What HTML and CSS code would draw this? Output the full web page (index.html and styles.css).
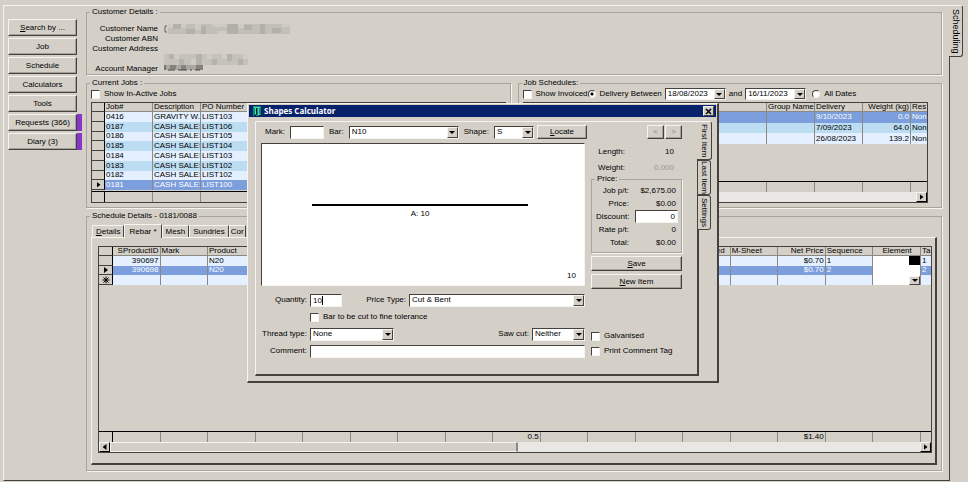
FILE: index.html
```
<!DOCTYPE html>
<html lang="en">
<head>
<meta charset="utf-8">
<title>Scheduling</title>
<link rel="stylesheet" href="styles.css">
</head>
<body>
<main class="page">
  <nav class="nav">
    <button class="btn"><u>S</u>earch by ...</button>
    <button class="btn">Job</button>
    <button class="btn">Schedule</button>
    <button class="btn">Calculators</button>
    <button class="btn">Tools</button>
    <div class="flagged"><button class="btn">Requests (366)</button></div>
    <div class="flagged"><button class="btn">Diary (3)</button></div>
  </nav>

  <div class="content">
    <fieldset class="group customer">
      <legend>Customer Details :</legend>
      <dl class="facts">
        <dt>Customer Name</dt>
        <dd><svg width="128" height="10" viewBox="0 0 128 10" aria-hidden="true"><path d="M3 2H1V8H3" fill="none" stroke="#666"/><path fill="#c2bfb9" d="M4 0h122v10H4z"/><path fill="#b3b0aa" d="M9 0h8v5H9zM22 5h9v5h-9zM37 2h5v8h-5zM63 0h11v10H63zM80 1h8v5h-8zM96 0h5v10h-5zM108 4h9v5h-9z"/><path fill="#cecbc4" d="M4 0h5v4H4zM17 0h5v4h-5zM31 0h6v6h-6zM48 0h15v3H48zM54 7h9v3h-9zM74 0h6v4h-6zM118 0h8v3h-8z"/></svg></dd>
        <dt>Customer ABN</dt><dd></dd>
        <dt>Customer Address</dt><dd></dd>
        <dt class="late">Account Manager</dt>
        <dd class="late"><svg width="86" height="18" viewBox="0 0 86 18" aria-hidden="true"><path fill="#c5c2bc" d="M0 0h84v11H0z"/><path fill="#b5b2ac" d="M5 0h5v5H5zM15 5h5v6h-5zM32 0h6v11h-6zM48 5h5v6h-5zM63 0h5v7h-5zM74 5h5v6h-5z"/><path fill="#cfccc5" d="M10 0h5v5h-5zM27 5h5v6h-5zM43 0h5v5h-5zM58 0h5v5h-5zM79 0h5v5h-5z"/><path fill="#aaa7a1" d="M0 11h39v5H0z"/><path fill="#85827d" d="M6 11h6v4H6zM17 11h5v5h-5zM32 11h7v5h-7z"/><path d="M1 11v5M4 16h7M14 16h9M26 16h2M31 16h5" stroke="#444"/></svg></dd>
      </dl>
    </fieldset>

    <div class="pair">
      <fieldset class="group">
        <legend>Current Jobs :</legend>
        <div class="filters"><label class="check"><input type="checkbox">Show In-Active Jobs</label></div>
        <div class="pane">
          <table class="grid jobs">
            <colgroup><col class="c-sel"><col class="c-m"><col class="c-m"><col class="c-m"><col></colgroup>
            <thead><tr><th></th><th>Job#</th><th>Description</th><th>PO Number</th><th></th></tr></thead>
            <tbody>
              <tr><th></th><td>0416</td><td>GRAVITY W.</td><td>LIST103</td><td></td></tr>
              <tr class="alt"><th></th><td>0187</td><td>CASH SALES</td><td>LIST106</td><td></td></tr>
              <tr><th></th><td>0186</td><td>CASH SALES</td><td>LIST105</td><td></td></tr>
              <tr class="alt"><th></th><td>0185</td><td>CASH SALES</td><td>LIST104</td><td></td></tr>
              <tr><th></th><td>0184</td><td>CASH SALES</td><td>LIST103</td><td></td></tr>
              <tr class="alt"><th></th><td>0183</td><td>CASH SALES</td><td>LIST102</td><td></td></tr>
              <tr><th></th><td>0182</td><td>CASH SALES</td><td>LIST102</td><td></td></tr>
              <tr class="picked"><th><i class="tri right"></i></th><td>0181</td><td>CASH SALES</td><td>LIST100</td><td></td></tr>
            </tbody>
          </table>
          <table class="grid totals">
            <colgroup><col class="c-sel"><col class="c-m"><col class="c-m"><col class="c-m"><col></colgroup>
            <tbody><tr><td></td><td></td><td></td><td></td><td></td></tr></tbody>
          </table>
        </div>
      </fieldset>

      <fieldset class="group">
        <legend>Job Schedules:</legend>
        <div class="filters">
          <label class="check"><input type="checkbox">Show Invoiced</label>
          <label class="check radio"><input type="radio" name="range" checked>Delivery Between</label>
          <span class="combo date"><select aria-label="From date"><option>18/08/2023</option></select><i class="drop"></i></span>
          <span>and</span>
          <span class="combo date"><select aria-label="To date"><option>16/11/2023</option></select><i class="drop"></i></span>
          <label class="check radio all"><input type="radio" name="range">All Dates</label>
        </div>
        <div class="pane inset">
          <table class="grid schedules">
            <colgroup><col class="c-sel"><col><col class="c-m"><col class="c-m"><col class="c-m"><col class="c-m"><col class="c-m"><col class="c-m"><col class="c-res"></colgroup>
            <thead><tr><th></th><th></th><th></th><th></th><th></th><th>Group Name</th><th>Delivery</th><th class="num">Weight (kg)</th><th>Res</th></tr></thead>
            <tbody>
              <tr class="picked"><th></th><td></td><td></td><td></td><td></td><td></td><td>9/10/2023</td><td class="num">0.0</td><td>Non</td></tr>
              <tr class="alt"><th></th><td></td><td></td><td></td><td></td><td></td><td>7/09/2023</td><td class="num">64.0</td><td>Non</td></tr>
              <tr><th></th><td></td><td></td><td></td><td></td><td></td><td>26/08/2023</td><td class="num">139.2</td><td>Non</td></tr>
            </tbody>
          </table>
          <table class="grid totals">
            <colgroup><col class="c-sel"><col><col class="c-m"><col class="c-m"><col class="c-m"><col class="c-m"><col class="c-m"><col class="c-m"><col class="c-res"></colgroup>
            <tbody><tr><td></td><td></td><td></td><td></td><td></td><td></td><td></td><td></td><td></td></tr></tbody>
          </table>
          <div class="scroll"><button aria-label="Scroll left"><i class="tri left"></i></button><span class="thumb short"></span><button aria-label="Scroll right"><i class="tri right"></i></button></div>
        </div>
      </fieldset>
    </div>

    <fieldset class="group details">
      <legend>Schedule Details - 0181/0088</legend>
      <div class="tabs">
        <button><u>D</u>etails</button><button class="on">Rebar *</button><button>Mesh</button><button>Sundries</button><button>Cor</button>
      </div>
      <div class="sheet">
        <div class="pane">
          <table class="grid products">
            <colgroup><col class="c-num"><col><col><col><col><col><col><col><col><col><col><col><col><col><col><col><col><col><col class="c-ta"></colgroup>
            <thead><tr><th></th><th class="num">SProductID</th><th>Mark</th><th>Product</th><th></th><th></th><th></th><th></th><th></th><th></th><th></th><th></th><th></th><th class="cut">ed</th><th>M-Sheet</th><th class="num">Net Price</th><th>Sequence</th><th class="mid">Element</th><th>Ta</th></tr></thead>
            <tbody>
              <tr><th></th><td class="num">390697</td><td></td><td>N20</td><td></td><td></td><td></td><td></td><td></td><td></td><td></td><td></td><td></td><td></td><td></td><td class="num">$0.70</td><td>1</td><td class="element"><i class="swatch"></i></td><td>1</td></tr>
              <tr class="picked"><th><i class="tri right"></i></th><td class="num">390698</td><td></td><td>N20</td><td></td><td></td><td></td><td></td><td></td><td></td><td></td><td></td><td></td><td></td><td></td><td class="num">$0.70</td><td>2</td><td class="element"></td><td>2</td></tr>
              <tr><th><svg class="star" width="8" height="8" viewBox="0 0 8 8" aria-hidden="true"><path d="M4 0.5V7.5M0.5 4H7.5M1.5 1.5L6.5 6.5M6.5 1.5L1.5 6.5" stroke="#000"/></svg></th><td></td><td></td><td></td><td></td><td></td><td></td><td></td><td></td><td></td><td></td><td></td><td></td><td></td><td></td><td></td><td></td><td class="element"><i class="drop"></i></td><td></td></tr>
            </tbody>
          </table>
          <table class="grid totals">
            <colgroup><col class="c-num"><col><col><col><col><col><col><col><col><col><col><col><col><col><col><col><col><col><col class="c-ta"></colgroup>
            <tbody><tr><td></td><td></td><td></td><td></td><td></td><td></td><td></td><td></td><td></td><td class="num">0.5</td><td></td><td></td><td></td><td></td><td></td><td class="num">$1.40</td><td></td><td></td><td></td></tr></tbody>
          </table>
          <div class="scroll"><button aria-label="Scroll left"><i class="tri left"></i></button><span class="thumb"></span><button aria-label="Scroll right"><i class="tri right"></i></button></div>
        </div>
      </div>
    </fieldset>
  </div>
</main>
<aside class="side"><button class="vtab main-tab">Scheduling</button></aside>

<section class="dialog" role="dialog" aria-labelledby="dlg-title">
  <header class="titlebar">
    <svg width="8" height="10" viewBox="0 0 8 10" aria-hidden="true"><path fill="#0a8a72" d="M0 0h8v10H0z"/><path d="M3.5 2V8.5M1 9.5H3M6 9.5H8" fill="none" stroke="#041c3c"/><path d="M1 1.5H7M2.5 2V8M5.5 2V8M5 8.5H7" stroke="#48dcae" fill="none"/></svg>
    <h1 id="dlg-title">Shapes Calculator</h1>
    <button class="close" aria-label="Close"><svg width="7" height="7" viewBox="0 0 7 7" aria-hidden="true"><path d="M1 1L6 6M6 1L1 6" stroke="#000" stroke-width="1.5"/></svg></button>
  </header>
  <div class="dialog-body">
    <div class="calc">
      <div class="toolbar">
        <label for="mark">Mark:</label><input id="mark" class="field mark" type="text">
        <label for="bar">Bar:</label><span class="combo bar"><select id="bar"><option>N10</option></select><i class="drop"></i></span>
        <label for="shape">Shape:</label><span class="combo shape"><select id="shape"><option>S</option></select><i class="drop"></i></span>
        <button class="btn locate"><u>L</u>ocate</button>
        <span class="steps"><button class="btn" disabled>&lt;</button><button class="btn" disabled>&gt;</button></span>
      </div>
      <div class="columns">
        <div class="left-col">
          <div class="canvas">
            <div class="shape-line"></div>
            <span class="dim">A: 10</span>
            <span class="count">10</span>
          </div>
          <div class="form">
            <label for="qty">Quantity:</label>
            <div class="line"><input id="qty" class="field qty" type="text" value="10"><i class="caret"></i><label class="push" for="ptype">Price Type:</label><span class="combo ptype"><select id="ptype"><option>Cut &amp; Bent</option></select><i class="drop"></i></span></div>
            <span></span>
            <div class="line"><label class="check"><input type="checkbox">Bar to be cut to fine tolerance</label></div>
            <label for="thread">Thread type:</label>
            <div class="line"><span class="combo thread"><select id="thread"><option>None</option></select><i class="drop"></i></span><label class="push" for="saw">Saw cut:</label><span class="combo saw"><select id="saw"><option>Neither</option></select><i class="drop"></i></span></div>
            <label for="comment">Comment:</label>
            <div class="line"><input id="comment" class="field comment" type="text"></div>
          </div>
        </div>
        <div class="right-col">
          <dl class="sums"><dt>Length:</dt><dd>10</dd><dt>Weight:</dt><dd class="dim-text">0.000</dd></dl>
          <fieldset class="group price">
            <legend>Price:</legend>
            <div class="row"><span>Job p/t:</span><output>$2,675.00</output></div>
            <div class="row"><span>Price:</span><output>$0.00</output></div>
            <div class="row"><label for="disc">Discount:</label><input id="disc" class="field" type="text" value="0"></div>
            <div class="row"><span>Rate p/t:</span><output>0</output></div>
            <div class="row"><span>Total:</span><output>$0.00</output></div>
          </fieldset>
          <button class="btn"><u>S</u>ave</button>
          <button class="btn"><u>N</u>ew Item</button>
          <div class="flags">
            <label class="check"><input type="checkbox">Galvanised</label>
            <label class="check"><input type="checkbox">Print Comment Tag</label>
          </div>
        </div>
      </div>
    </div>
    <div class="vtabs"><button class="vtab on">First Item</button><button class="vtab">Last Item</button><button class="vtab">Settings</button></div>
  </div>
</section>
</body>
</html>
```
FILE: styles.css
```
:root {
  --face: #d4d0c8;
  --light: #f6f4f0;
  --shade: #8c8982;
  --dark: #45423e;
  --ink: #000;
  --row: #e4f0ff;
  --row-alt: #bcdcf2;
  --pick: #7c9edc;
}

* { box-sizing: border-box; }

body {
  margin: 0;
  min-height: 100vh;
  padding: 5px 0 1px 3px;
  display: flex;
  position: relative;
  background: var(--face);
  color: var(--ink);
  font: 8px/10px "Liberation Sans", sans-serif;
  white-space: nowrap;
}

button, input, select { font: inherit; color: inherit; margin: 0; padding: 0; }
fieldset, dl, dd, h1 { margin: 0; padding: 0; min-width: 0; }

/* Frame */
.page {
  flex: 1;
  min-width: 0;
  display: flex;
  border: 1px solid var(--light);
  border-right-color: var(--dark);
  border-bottom-color: var(--dark);
}
.side { width: 18px; }
.nav {
  width: 82px;
  padding: 13px 4px 0;
  display: flex;
  flex-direction: column;
  gap: 2px;
}
.nav .btn { width: 69px; height: 17px; }
.flagged { display: flex; }
.flagged::after { content: ""; width: 5px; background: #8636c8; }

.btn {
  background: var(--face);
  border: 1px solid var(--light);
  border-right: 1px solid var(--dark);
  border-bottom: 1px solid var(--dark);
  box-shadow: inset -1px -1px 0 #a5a199;
}
.btn:disabled { color: #8c8982; }

.content {
  flex: 1;
  min-width: 0;
  padding: 1px 7px 9px 0;
  display: flex;
  flex-direction: column;
  gap: 3px;
}
.group {
  border: 1px solid #a8a59e;
  box-shadow: 1px 1px 0 var(--light);
  padding: 0 4px 4px;
}
.group > legend { height: 10px; padding: 0 2px; margin-left: -1px; background: var(--face); }

.customer { padding-bottom: 0; }
.facts { display: grid; grid-template-columns: 67px 1fr; column-gap: 6px; padding-top: 7px; }
.facts dt { text-align: right; height: 10px; }
.facts dd { height: 10px; }
.facts .late { margin-top: 10px; }
.facts svg { display: block; }
.facts dd.late svg { margin-top: -10px; }

.pair { display: grid; grid-template-columns: 1fr 1fr; gap: 7px; height: 130px; }
.pair .group { display: flex; flex-direction: column; }
.filters { display: flex; align-items: center; gap: 3px; height: 12px; }

/* Controls */
.check { display: flex; align-items: center; gap: 4px; }
.check input {
  appearance: none;
  flex: none;
  width: 9px;
  height: 9px;
  background: #fff;
  border: 1px solid var(--dark);
  border-right-color: var(--light);
  border-bottom-color: var(--light);
}
.radio input { width: 8px; height: 8px; border-radius: 50%; }
.radio input:checked { background: radial-gradient(#000 1px, #fff 2px); }
.check.radio { margin-left: -3px; }
.check.all { margin-left: 3px; }

.field, .combo {
  height: 13px;
  background: #fff;
  border: 1px solid var(--dark);
  border-right-color: var(--light);
  border-bottom-color: var(--light);
}
.field { padding: 0 2px; outline: 0; }
.combo { display: flex; align-items: stretch; }
.combo select {
  appearance: none;
  flex: 1;
  min-width: 0;
  border: 0;
  padding-left: 2px;
  background: transparent;
  outline: 0;
}
.drop {
  width: 11px;
  display: flex;
  align-items: center;
  justify-content: center;
  background: var(--face);
  border: 1px solid var(--light);
  border-right-color: var(--dark);
  border-bottom-color: var(--dark);
}
.drop::before { content: ""; border: 3px solid transparent; border-top-color: #000; border-bottom: 0; }
.combo.date { width: 61px; height: 12px; }

.tri { display: block; width: 4px; height: 6px; background: #000; }
.tri.right { clip-path: polygon(0 0, 100% 50%, 0 100%); }
.tri.left { clip-path: polygon(100% 0, 0 50%, 100% 100%); }

/* Data grids */
.pane {
  flex: 1;
  min-width: 0;
  min-height: 0;
  display: flex;
  flex-direction: column;
  overflow: hidden;
  border: 1px solid var(--dark);
}
.pair .pane { margin-top: 2px; }
.pane.inset { margin-right: 9px; }
.grid { width: 100%; table-layout: fixed; border-collapse: separate; border-spacing: 0; }
.grid th, .grid td {
  height: 9px;
  padding: 0 0 0 1px;
  line-height: 8px;
  font-weight: normal;
  text-align: left;
  overflow: hidden;
  border-right: 1px solid var(--shade);
}
.grid tr > :first-child { border-right-color: var(--ink); text-align: center; }
.grid tr > :last-child { border-right: 0; }
.grid thead th { border-bottom: 1px solid var(--shade); }
.grid thead th:first-child, .grid tbody th { border-bottom: 1px solid var(--dark); background: var(--face); }
.grid tbody { background: var(--row); }
.grid .alt { background: var(--row-alt); }
.grid .picked { background: var(--pick); color: #fff; }
.grid .num { text-align: right; padding-right: 1px; }
.grid .mid { text-align: center; }
.grid .cut { text-align: right; padding-right: 5px; }
.grid .tri { margin: 0 auto; }
.grid .star { display: block; margin: 0 auto; }
.c-sel { width: 13px; }
.c-m { width: 48px; }
.c-num { width: 14px; }
.c-res { width: 16px; }
.c-ta { width: 10px; }
.jobs { height: 87px; }
.schedules { height: 41px; }
.products { height: 38px; }
.grid.totals { height: 11px; margin-top: auto; border-top: 1px solid var(--ink); }
.grid.totals tbody { background: var(--face); }
.grid .element { background: #fff; padding: 0; }
.element i { display: flex; width: 11px; height: 9px; margin-left: auto; }
.swatch { background: #000; }

.scroll { display: flex; height: 10px; background: #e9e7e4; flex: none; }
.scroll button {
  flex: none;
  width: 11px;
  display: flex;
  align-items: center;
  justify-content: center;
  background: var(--face);
  border: 1px solid var(--light);
  border-right-color: var(--ink);
  border-bottom-color: var(--ink);
}
.thumb { width: 49%; background: var(--face); border: 1px solid var(--light); border-right: 2px solid var(--shade); }
.thumb.short { width: 30%; }
.scroll button:last-child { margin-left: auto; }

/* Schedule details */
.details { flex: 1; display: flex; flex-direction: column; padding-bottom: 5px; }
.tabs { display: flex; align-items: flex-end; padding: 3px 0 0 1px; }
.tabs button {
  height: 12px;
  padding: 0 3px;
  background: var(--face);
  border: 1px solid var(--light);
  border-right: 1px solid var(--dark);
  border-bottom: 0;
}
.tabs .on { height: 14px; padding: 0 4px; margin-bottom: -1px; position: relative; }
.tabs button:last-child { padding: 0 1px; }
.sheet {
  flex: 1;
  display: flex;
  padding: 8px 3px 10px 6px;
  border: 1px solid var(--light);
  border-right: 2px solid var(--dark);
  border-bottom: 2px solid var(--dark);
}

/* Vertical tabs */
.vtab {
  writing-mode: vertical-rl;
  width: 14px;
  background: var(--face);
  border: 1px solid var(--dark);
  border-left: 0;
  border-radius: 0 3px 3px 0;
  white-space: nowrap;
}
.main-tab { height: 52px; margin-left: -1px; border-top-color: var(--light); font-size: 9px; }

/* Shapes calculator */
.dialog {
  position: absolute;
  left: 247px;
  top: 103px;
  width: 472px;
  padding: 1px;
  background: var(--face);
  border: 1px solid var(--light);
  border-right: 2px solid var(--dark);
  border-bottom: 2px solid var(--dark);
}
.titlebar {
  display: flex;
  align-items: center;
  gap: 3px;
  height: 12px;
  padding: 0 2px 0 4px;
  background: #08216b;
  color: #fff;
}
.titlebar h1 { flex: 1; font: bold 8px/12px "Open Sans", sans-serif; }
.close {
  width: 11px;
  height: 10px;
  display: flex;
  align-items: center;
  justify-content: center;
  background: var(--face);
  border: 1px solid var(--light);
  border-right-color: var(--dark);
  border-bottom-color: var(--dark);
}
.dialog-body { display: flex; padding: 4px 4px 4px 6px; }
.calc {
  flex: 1;
  min-width: 0;
  padding: 3px 15px 16px 5px;
  border: 1px solid var(--light);
  border-right: 2px solid var(--dark);
  border-bottom: 2px solid var(--dark);
}
.vtabs { display: flex; flex-direction: column; margin-left: -1px; }
.vtabs .vtab { height: 35px; width: 13px; }
.vtabs .vtab.on { height: 39px; width: 15px; margin-left: -1px; border-top-color: var(--light); }

.toolbar { display: flex; align-items: center; gap: 5px; height: 14px; padding-left: 4px; }
.toolbar .mark { width: 34px; }
.combo.bar { width: 110px; }
.combo.shape { width: 40px; }
.toolbar .locate { width: 50px; height: 14px; margin-left: -2px; }
.steps { display: flex; gap: 1px; margin-left: auto; }
.steps .btn { width: 17px; height: 14px; }

.columns { display: flex; gap: 6px; padding-top: 4px; }
.left-col { flex: 1; min-width: 0; }
.canvas {
  height: 143px;
  padding: 60px 8px 4px;
  display: flex;
  flex-direction: column;
  background: #fff;
  border: 1px solid var(--dark);
  border-right-color: var(--light);
  border-bottom-color: var(--light);
}
.shape-line, .dim { margin: 0 48px 0 42px; }
.shape-line { height: 2px; background: #000; }
.dim { text-align: center; padding-top: 3px; }
.count { text-align: right; margin-top: auto; }

.form {
  display: grid;
  grid-template-columns: 46px 1fr;
  column-gap: 3px;
  row-gap: 3px;
  padding-top: 7px;
  align-items: center;
}
.form > label { text-align: right; }
.line { display: flex; align-items: center; gap: 3px; height: 14px; }
.qty { width: 32px; }
.caret { width: 1px; height: 9px; margin-left: -23px; margin-right: 19px; background: #000; }
.push { margin-left: auto; }
.ptype { width: 176px; }
.thread { width: 84px; }
.saw { width: 53px; }
.comment { flex: 1; min-width: 0; }

.right-col { width: 91px; display: flex; flex-direction: column; gap: 3px; }
.right-col > .btn { height: 15px; }
.sums { display: grid; grid-template-columns: 34px 1fr; row-gap: 6px; padding: 4px 8px 0 0; text-align: right; }
.dim-text { color: #9a978f; }
.price { margin-top: -2px; padding: 0 3px 3px 4px; }
.row { display: flex; align-items: center; height: 13px; }
.row > :first-child { width: 33px; text-align: right; }
.row output { flex: 1; text-align: right; padding-right: 2px; }
.row .field { flex: 1; min-width: 0; margin-left: 6px; text-align: right; }
.flags { display: flex; flex-direction: column; gap: 5px; padding-top: 39px; }
```
